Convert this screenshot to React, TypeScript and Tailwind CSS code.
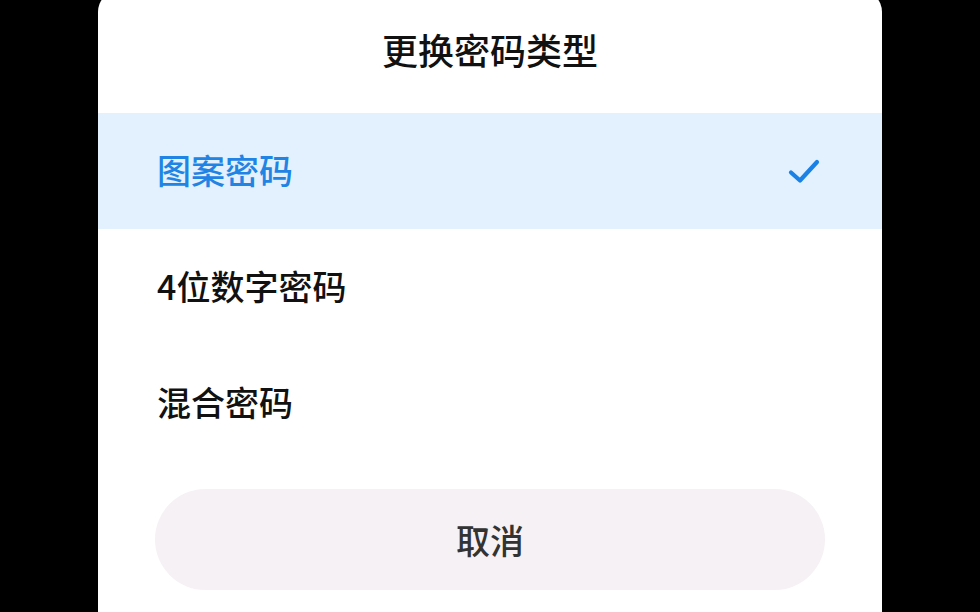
import React from "react";

const font = { fontFamily: '"Noto Sans CJK SC", "Noto Sans", sans-serif' };

function Check() {
  return (
    <svg width="32" height="26" viewBox="0 0 32 26" fill="none">
      <path d="M3 14.5 L12 22.5 L29 4" stroke="#1a82e6" strokeWidth="4.2" strokeLinecap="round" strokeLinejoin="round" />
    </svg>
  );
}

export default function App() {
  const options = [
    { label: "图案密码", selected: true },
    { label: "4位数字密码", selected: false },
    { label: "混合密码", selected: false },
  ];
  return (
    <div className="w-[980px] h-[612px] bg-black flex justify-center overflow-hidden" style={font}>
      <div className="w-[784px] -mt-[10px] h-[640px] bg-white rounded-t-[22px] flex flex-col">
        <div className="h-[123px] pb-[6px] flex items-center justify-center">
          <span className="text-[36px] font-medium text-[#111] leading-none">更换密码类型</span>
        </div>
        {options.map((o) => (
          <div
            key={o.label}
            className={`h-[116px] flex items-center justify-between pl-[59px] pr-[62px] ${o.selected ? "bg-[#e3f0fd]" : "bg-white"}`}
          >
            <span className={`text-[34px] font-medium leading-none pb-[2px] ${o.selected ? "text-[#1f84e4]" : "text-[#111]"}`}>
              {o.label}
            </span>
            {o.selected && <Check />}
          </div>
        ))}
        <div className="mt-[28px] mx-[57px] h-[101px] rounded-full bg-[#f5f1f4] flex items-center justify-center">
          <span className="text-[34px] font-medium text-[#333] leading-none">取消</span>
        </div>
      </div>
    </div>
  );
}
